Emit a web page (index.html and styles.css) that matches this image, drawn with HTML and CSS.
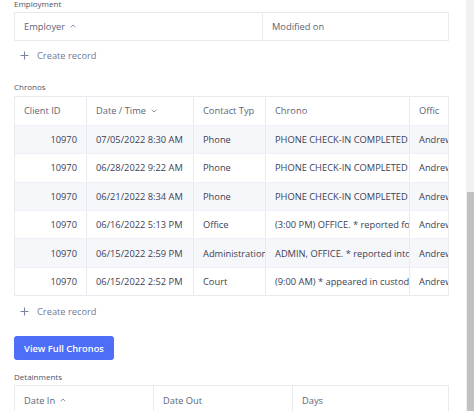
FILE: index.html
```html
<!DOCTYPE html>
<html>
<head>
<meta charset="utf-8">
<link rel="stylesheet" href="styles.css">
</head>
<body>
<div class="page">
  <div class="label label-first">Employment</div>
  <div class="tbl">
    <div class="row head emp">
      <div class="cell">Employer <svg class="chev" width="6" height="4" viewBox="0 0 6 4"><path d="M0.6 3.3 L3 1 L5.4 3.3" fill="none" stroke="#8a91a3" stroke-width="1"/></svg></div>
      <div class="cell">Modified on</div>
    </div>
  </div>
  <div class="create"><svg width="9" height="9" viewBox="0 0 9 9"><path d="M4.5 0.5 V8.5 M0.5 4.5 H8.5" stroke="#7a84a0" stroke-width="1.1" fill="none"/></svg><span>Create record</span></div>

  <div class="label label-chronos">Chronos</div>
  <div class="tbl">
    <div class="row head chr">
      <div class="cell">Client ID</div>
      <div class="cell">Date / Time <svg class="chev" width="6" height="4" viewBox="0 0 6 4"><path d="M0.6 0.7 L3 3 L5.4 0.7" fill="none" stroke="#8a91a3" stroke-width="1"/></svg></div>
      <div class="cell">Contact Typ</div>
      <div class="cell">Chrono</div>
      <div class="cell">Offic</div>
    </div>
    <div class="row chr alt">
      <div class="cell num">10970</div>
      <div class="cell">07/05/2022 8:30 AM</div>
      <div class="cell">Phone</div>
      <div class="cell">PHONE CHECK-IN COMPLETED</div>
      <div class="cell">Andrew</div>
    </div>
    <div class="row chr">
      <div class="cell num">10970</div>
      <div class="cell">06/28/2022 9:22 AM</div>
      <div class="cell">Phone</div>
      <div class="cell">PHONE CHECK-IN COMPLETED</div>
      <div class="cell">Andrew</div>
    </div>
    <div class="row chr alt">
      <div class="cell num">10970</div>
      <div class="cell">06/21/2022 8:34 AM</div>
      <div class="cell">Phone</div>
      <div class="cell">PHONE CHECK-IN COMPLETED</div>
      <div class="cell">Andrew</div>
    </div>
    <div class="row chr">
      <div class="cell num">10970</div>
      <div class="cell">06/16/2022 5:13 PM</div>
      <div class="cell">Office</div>
      <div class="cell">(3:00 PM) OFFICE. * reported for</div>
      <div class="cell">Andrew</div>
    </div>
    <div class="row chr alt">
      <div class="cell num">10970</div>
      <div class="cell">06/15/2022 2:59 PM</div>
      <div class="cell">Administration</div>
      <div class="cell">ADMIN, OFFICE. * reported into</div>
      <div class="cell">Andrew</div>
    </div>
    <div class="row chr">
      <div class="cell num">10970</div>
      <div class="cell">06/15/2022 2:52 PM</div>
      <div class="cell">Court</div>
      <div class="cell">(9:00 AM) * appeared in custody</div>
      <div class="cell">Andrew</div>
    </div>
  </div>
  <div class="create"><svg width="9" height="9" viewBox="0 0 9 9"><path d="M4.5 0.5 V8.5 M0.5 4.5 H8.5" stroke="#7a84a0" stroke-width="1.1" fill="none"/></svg><span>Create record</span></div>

  <button class="btn">View Full Chronos</button>

  <div class="label label-det">Detainments</div>
  <div class="tbl">
    <div class="row head det">
      <div class="cell">Date In <svg class="chev" width="6" height="4" viewBox="0 0 6 4"><path d="M0.6 3.3 L3 1 L5.4 3.3" fill="none" stroke="#8a91a3" stroke-width="1"/></svg></div>
      <div class="cell">Date Out</div>
      <div class="cell">Days</div>
    </div>
  </div>
</div>
<div class="scrollbar"><div class="thumb"></div></div>
</body>
</html>
```
FILE: styles.css
```css
html, body {
  margin: 0;
  padding: 0;
  background: #ffffff;
  overflow: hidden;
  height: 411px;
}
body {
  font-family: "Open Sans", "Noto Sans", sans-serif;
  color: #3b4153;
}
.page {
  width: 435px;
  padding-left: 14px;
}
.label {
  font-size: 8px;
  line-height: 10px;
  color: #4e5466;
}
.label-first {
  margin-top: -1px;
  margin-bottom: 2.5px;
}
.label-chronos {
  margin-top: 11px;
  margin-bottom: 4px;
}
.label-det {
  margin-top: 12px;
  margin-bottom: 3px;
}
.tbl {
  border: 1px solid #e8eaf0;
  overflow: hidden;
  box-sizing: border-box;
  width: 435px;
}
.row {
  display: grid;
  height: 28.4px;
  box-sizing: border-box;
}
.row.emp {
  height: 27px;
}
.row + .row {
  border-top: 1px solid #eef0f5;
}
.row.alt {
  background: #f6f7fb;
}
.emp { grid-template-columns: 247px 200px; }
.chr { grid-template-columns: 71px 107px 72px 144px 110px; }
.det { grid-template-columns: 138px 139px 170px; }
.cell {
  font-size: 9.3px;
  padding: 0 0 0 9px;
  white-space: nowrap;
  overflow: hidden;
  box-sizing: border-box;
  display: flex;
  align-items: center;
}
.cell + .cell {
  border-left: 1px solid #e8eaf0;
}
.cell.num {
  justify-content: flex-end;
  padding: 0 9px 0 0;
}
.head .cell {
  color: #5d6477;
  font-weight: 500;
}
.chev {
  margin-left: 5px;
  flex: none;
}
.create {
  height: 30px;
  display: flex;
  align-items: center;
  padding-left: 6px;
  color: #6f7a98;
  font-size: 9.3px;
}
.create span {
  margin-left: 8px;
}
.btn {
  margin-top: 10px;
  height: 24px;
  width: 100px;
  border: none;
  border-radius: 3px;
  background: #4d6ef6;
  color: #ffffff;
  font-family: "Open Sans", "Noto Sans", sans-serif;
  font-size: 9.3px;
  font-weight: 600;
  padding: 0;
  display: block;
}
.scrollbar {
  position: fixed;
  top: 0;
  right: 0;
  width: 8px;
  height: 411px;
  background: #f1f1f1;
}
.thumb {
  position: absolute;
  left: 1px;
  right: 0;
  top: 192px;
  bottom: 0;
  background: #c1c1c1;
}
```
